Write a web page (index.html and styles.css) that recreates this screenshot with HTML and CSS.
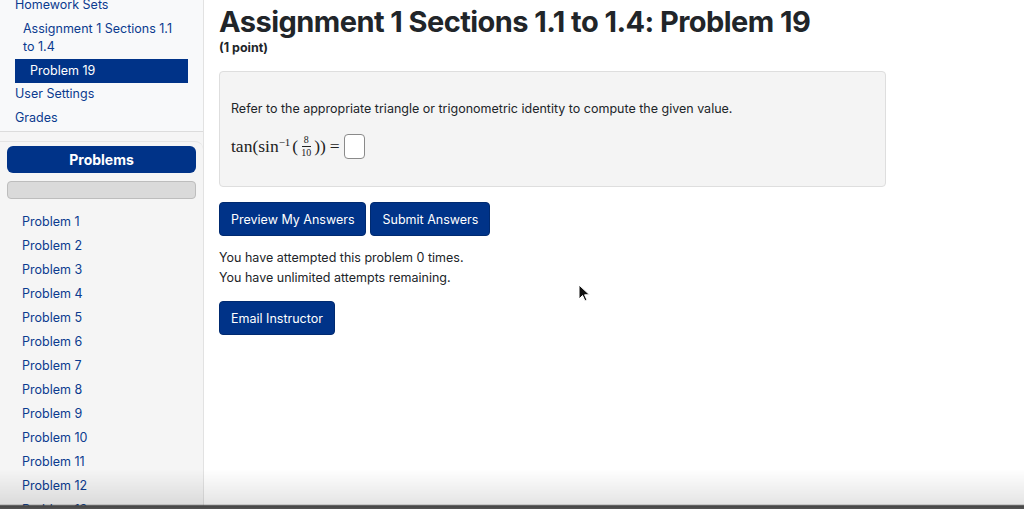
FILE: index.html
```html
<!DOCTYPE html>
<html>
<head>
  <title>Assignment 1 Sections 1.1 to 1.4: Problem 19</title>
  <link rel="stylesheet" href="styles.css">
</head>
<body>
  <div class="page">
    <aside class="sidebar">
      <div class="site-nav">
        <a class="nav-item" href="#">Homework Sets</a>
        <a class="nav-item sub" href="#">Assignment 1 Sections 1.1 to 1.4</a>
        <a class="nav-item active" href="#">Problem 19</a>
        <a class="nav-item" href="#">User Settings</a>
        <a class="nav-item" href="#">Grades</a>
      </div>

      <div class="problems-panel">
        <div class="panel-head">Problems</div>
        <div class="progress"></div>
        <ul class="problem-list">
          <li><a href="#">Problem 1</a></li>
          <li><a href="#">Problem 2</a></li>
          <li><a href="#">Problem 3</a></li>
          <li><a href="#">Problem 4</a></li>
          <li><a href="#">Problem 5</a></li>
          <li><a href="#">Problem 6</a></li>
          <li><a href="#">Problem 7</a></li>
          <li><a href="#">Problem 8</a></li>
          <li><a href="#">Problem 9</a></li>
          <li><a href="#">Problem 10</a></li>
          <li><a href="#">Problem 11</a></li>
          <li><a href="#">Problem 12</a></li>
          <li><a href="#">Problem 13</a></li>
        </ul>
      </div>
    </aside>

    <main class="content">
      <h1>Assignment 1 Sections 1.1 to 1.4: Problem 19</h1>
      <div class="points">(1 point)</div>

      <div class="problem">
        <p>Refer to the appropriate triangle or trigonometric identity to compute the given value.</p>
        <div class="math">
          <span>tan(sin</span><sup>&minus;1</sup><span>(</span>
          <span class="frac"><span class="num">8</span><span class="den">10</span></span>
          <span>))</span><span class="eq">=</span><input type="text" class="answer">
        </div>
      </div>

      <div class="actions">
        <button class="btn">Preview My Answers</button>
        <button class="btn">Submit Answers</button>
      </div>

      <div class="attempts">
        <div>You have attempted this problem 0 times.</div>
        <div>You have unlimited attempts remaining.</div>
      </div>

      <button class="btn">Email Instructor</button>
    </main>
  </div>

  <!-- mouse pointer from the screen capture -->
  <svg class="cursor" width="14" height="20" viewBox="0 0 14 20">
    <path d="M1 1 L1 15 L4.5 11.5 L7 17 L9 16 L6.6 10.8 L11.5 10.8 Z" fill="#111" stroke="#fff" stroke-width="1"/>
  </svg>
  <div class="screen-fade"></div>
</body>
</html>
```

FILE: styles.css
```css
body {
  margin: 0;
  font-family: Inter, "Noto Sans", sans-serif;
  color: #212529;
  background: #fff;
  overflow: hidden;
}

a {
  color: #0b3b8f;
  text-decoration: none;
}

.page {
  display: flex;
  height: 509px;
}

.sidebar {
  width: 203px;
  flex-shrink: 0;
  border-right: 1px solid #e2e2e2;
  background: #f5f5f5;
}

.site-nav {
  display: flex;
  flex-direction: column;
  margin-top: -7px;
  padding: 0 15px 1px 15px;
  background: #f8f9fa;
  border-bottom: 1px solid #dcdcdc;
  font-size: 12.5px;
}

.nav-item {
  line-height: 18px;
  padding: 3px 0;
}

.nav-item.sub {
  padding-left: 8px;
  padding-right: 10px;
}

.nav-item.active {
  background: #003388;
  color: #fff;
  padding-left: 15px;
}

.nav-item.active + .nav-item {
  margin-top: -1px;
}

.problems-panel {
  margin-top: 9px;
  padding: 4px 7px 0 7px;
  border-top: 1px solid #e4e4e4;
  border-radius: 0 8px 0 0;
  background: #f5f5f5;
}

.panel-head {
  background: #003388;
  color: #fff;
  font-weight: 700;
  font-size: 14px;
  text-align: center;
  height: 27px;
  line-height: 27px;
  border-radius: 6px;
}

.progress {
  margin-top: 8px;
  height: 16px;
  background: #dadada;
  border: 1px solid #bdbdbd;
  border-radius: 4px;
}

.problem-list {
  list-style: none;
  margin: 11px 0 0 0;
  padding: 0 0 0 15px;
  font-size: 12.5px;
}

.problem-list li {
  line-height: 24px;
}

.content {
  padding-left: 15px;
}

h1 {
  margin: 5px 0 0 0;
  font-size: 29px;
  font-weight: 700;
  letter-spacing: -0.55px;
  line-height: 34px;
  color: #212529;
}

.points {
  font-size: 12.5px;
  font-weight: 700;
  margin-top: 1px;
}

.problem {
  width: 643px;
  margin-top: 16px;
  padding: 20px 11px 27px 11px;
  background: #f4f4f4;
  border: 1px solid #dedede;
  border-radius: 4px;
  font-size: 12.5px;
}

.problem p {
  margin: 8px 0 0 0;
  line-height: 18px;
}

.math {
  display: flex;
  align-items: center;
  margin-top: 16px;
  font-family: "Liberation Serif", "DejaVu Serif", serif;
  font-size: 17.5px;
  color: #222;
}

.math sup {
  font-size: 11px;
  align-self: flex-start;
  margin-top: 2px;
  margin-right: 2px;
}

.frac {
  display: inline-flex;
  flex-direction: column;
  align-items: center;
  font-size: 10px;
  line-height: 10px;
  margin: 0 3px;
}

.frac .num {
  border-bottom: 1px solid #222;
  padding: 0 2px 1px 2px;
}

.frac .den {
  padding-top: 1px;
}

.eq {
  margin: 0 4px;
}

.answer {
  width: 19px;
  height: 23px;
  padding: 0;
  border: 1px solid #8a8a8a;
  border-radius: 4px;
  background: #fff;
}

.actions {
  display: flex;
  gap: 4px;
  margin-top: 15px;
}

.btn {
  font-family: Inter, "Noto Sans", sans-serif;
  background: #003388;
  color: #fff;
  border: 1px solid #002a70;
  border-radius: 4px;
  font-size: 12.5px;
  height: 34px;
  padding: 0 11px;
  cursor: pointer;
}

.attempts {
  margin: 12px 0 13px 0;
  font-size: 12.5px;
  line-height: 20px;
}

.cursor {
  position: absolute;
  left: 578px;
  top: 284px;
}

.screen-fade {
  position: fixed;
  left: 0;
  right: 0;
  bottom: 0;
  height: 40px;
  background: linear-gradient(to bottom, rgba(0, 0, 0, 0), rgba(0, 0, 0, 0.1) 88%, #444 92%, #555 100%);
  pointer-events: none;
}
```
